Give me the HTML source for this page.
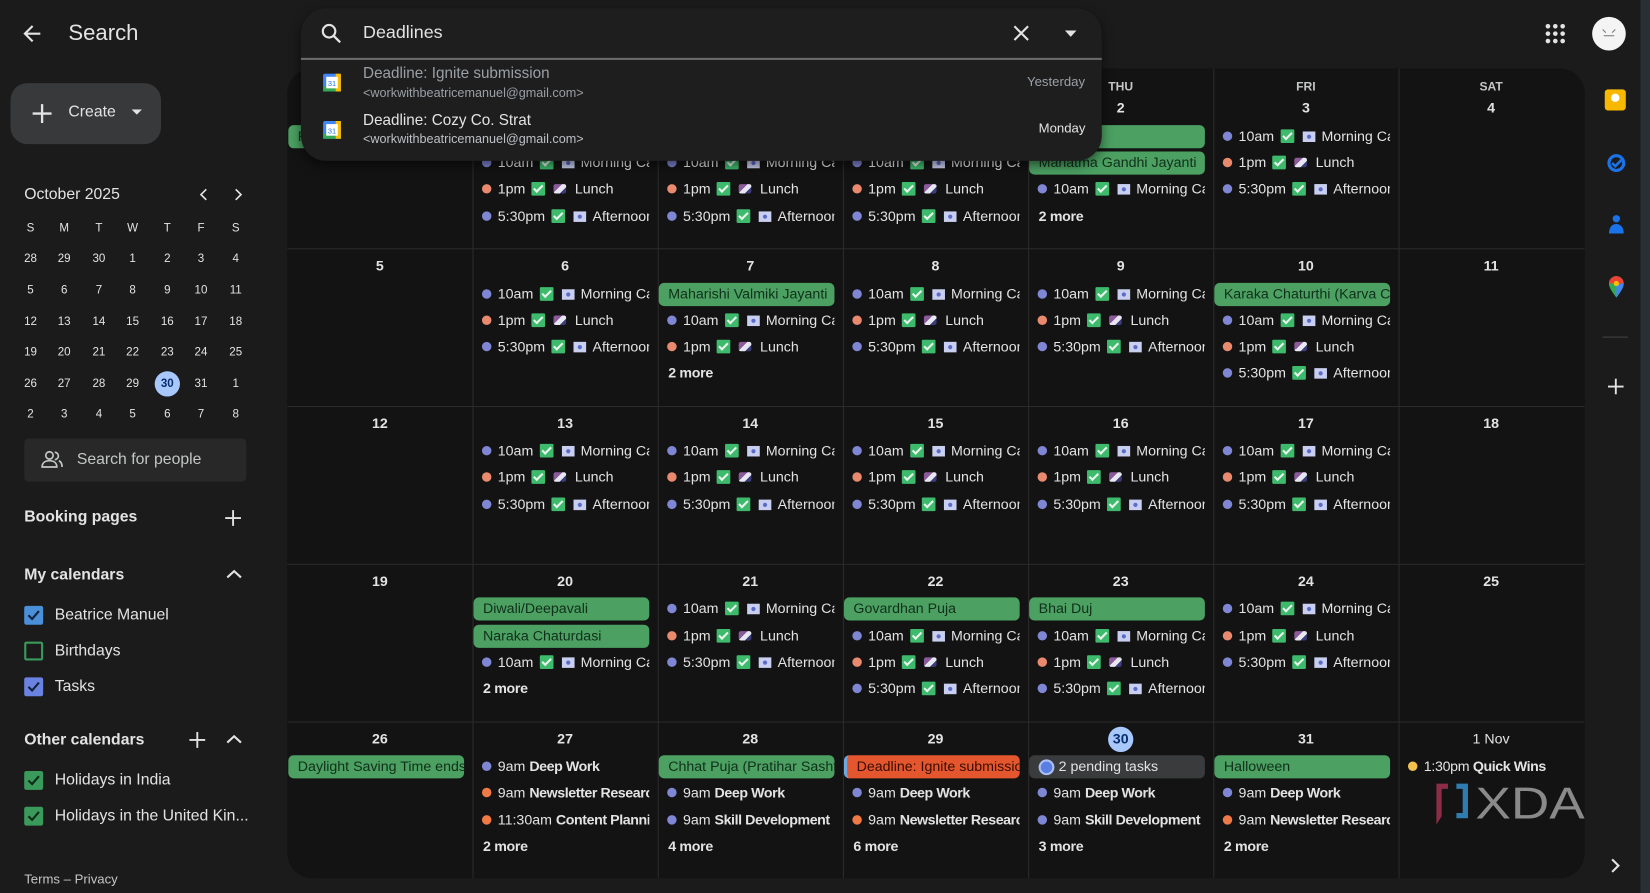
<!DOCTYPE html>
<html><head><meta charset="utf-8"><style>
*{margin:0;padding:0;box-sizing:border-box}
html,body{width:1650px;height:893px;overflow:hidden;background:#1b1b1b;font-family:"Liberation Sans",Arial,sans-serif;color:#e3e3e3}
#w{position:absolute;left:0;top:0;width:1568px;height:849px;transform:scale(1.0523,1.0518);transform-origin:0 0;background:#1b1b1b}
.a{position:absolute}
.t{position:absolute;white-space:nowrap}
#cal{position:absolute;left:273px;top:65px;width:1233px;height:770px;background:#131313;border-radius:24px;overflow:hidden}
.vl{position:absolute;top:0;width:1px;height:770px;background:#2b2b2b}
.hl{position:absolute;left:0;width:1233px;height:1px;background:#2b2b2b}
.dn{position:absolute;width:176px;text-align:center;font-size:13.5px;color:#e3e3e3;font-weight:bold}
.hd{position:absolute;width:176px;text-align:center;font-size:11.5px;color:#c4c7c5;font-weight:bold}
.e{position:absolute;width:160px;height:22px;line-height:22px;font-size:13.5px;color:#e3e3e3;white-space:nowrap;overflow:hidden}
.d{display:inline-block;width:9px;height:9px;border-radius:50%;margin:0 6px 0 1px;vertical-align:0}
.bl{background:#7f86d4}.or{background:#e98a6e}.oo{background:#f07a45}.ye{background:#f2c14e}
.k{display:inline-block;width:13px;height:13px;background:#3dba6c;margin:0 8px 0 6px;vertical-align:-2px;border-radius:1px;position:relative}
.k:after{content:"";position:absolute;left:4px;top:1px;width:3px;height:7px;border:solid #e8f5ec;border-width:0 2px 2px 0;transform:rotate(45deg)}
.v{display:inline-block;width:12px;height:10px;background:#c9cff0;margin-right:6px;vertical-align:-1px;position:relative}
.v:after{content:"";position:absolute;left:4px;top:3px;width:4px;height:4px;border-radius:50%;background:#5b6bc9}
.u{display:inline-block;width:12px;height:9px;margin-right:8px;vertical-align:0;background:linear-gradient(135deg,#8b5a9a 0 40%,#e7e7f2 40% 70%,#3c3c7a 70%);border-radius:2px}
.e b.n{font-weight:bold;color:#e3e3e3;letter-spacing:-0.4px}
.c{position:absolute;width:167px;height:22px;line-height:22px;font-size:13.5px;border-radius:5px;background:#4ba062;color:#10301a;padding-left:9px;white-space:nowrap;overflow:hidden}
.m{position:absolute;font-size:13.5px;font-weight:bold;color:#e3e3e3;letter-spacing:-0.3px}
.mc{position:absolute;width:20px;text-align:center;font-size:11px;color:#e3e3e3}
.cb{position:absolute;left:23px;width:18px;height:18px;border-radius:2px}
.lb{position:absolute;left:52px;font-size:15px;color:#e3e3e3;white-space:nowrap}
</style></head><body><div id="w">

<svg class="a" style="left:20px;top:21px" width="22" height="22" viewBox="0 0 24 24"><path d="M20 12H5M12 4l-8 8 8 8" stroke="#e3e3e3" stroke-width="2.2" fill="none"/></svg>
<div class="t" style="left:65px;top:20px;font-size:21px;color:#e3e3e3">Search</div>
<div class="a" style="left:10px;top:79px;width:143px;height:58px;background:#37393b;border-radius:16px"></div>
<svg class="a" style="left:29px;top:97px" width="22" height="22" viewBox="0 0 22 22"><path d="M11 2v18M2 11h18" stroke="#e3e3e3" stroke-width="2.2"/></svg>
<div class="t" style="left:65px;top:98px;font-size:15px;color:#e3e3e3">Create</div>
<svg class="a" style="left:125px;top:104px" width="10" height="6"><path d="M0 0h10L5 5z" fill="#e3e3e3"/></svg>

<div class="t" style="left:23px;top:176px;font-size:15px;color:#e3e3e3">October 2025</div>
<svg class="a" style="left:188px;top:179px" width="12" height="12"><path d="M8 1L3 6l5 5" stroke="#e3e3e3" stroke-width="1.6" fill="none"/></svg>
<svg class="a" style="left:220px;top:179px" width="12" height="12"><path d="M4 1l5 5-5 5" stroke="#e3e3e3" stroke-width="1.6" fill="none"/></svg>

<div class="mc" style="left:19px;top:211px">S</div><div class="mc" style="left:51px;top:211px">M</div><div class="mc" style="left:84px;top:211px">T</div><div class="mc" style="left:116px;top:211px">W</div><div class="mc" style="left:149px;top:211px">T</div><div class="mc" style="left:181px;top:211px">F</div><div class="mc" style="left:214px;top:211px">S</div>
<div class="mc" style="left:19px;top:240px">28</div><div class="mc" style="left:51px;top:240px">29</div><div class="mc" style="left:84px;top:240px">30</div><div class="mc" style="left:116px;top:240px">1</div><div class="mc" style="left:149px;top:240px">2</div><div class="mc" style="left:181px;top:240px">3</div><div class="mc" style="left:214px;top:240px">4</div>
<div class="mc" style="left:19px;top:270px">5</div><div class="mc" style="left:51px;top:270px">6</div><div class="mc" style="left:84px;top:270px">7</div><div class="mc" style="left:116px;top:270px">8</div><div class="mc" style="left:149px;top:270px">9</div><div class="mc" style="left:181px;top:270px">10</div><div class="mc" style="left:214px;top:270px">11</div>
<div class="mc" style="left:19px;top:300px">12</div><div class="mc" style="left:51px;top:300px">13</div><div class="mc" style="left:84px;top:300px">14</div><div class="mc" style="left:116px;top:300px">15</div><div class="mc" style="left:149px;top:300px">16</div><div class="mc" style="left:181px;top:300px">17</div><div class="mc" style="left:214px;top:300px">18</div>
<div class="mc" style="left:19px;top:329px">19</div><div class="mc" style="left:51px;top:329px">20</div><div class="mc" style="left:84px;top:329px">21</div><div class="mc" style="left:116px;top:329px">22</div><div class="mc" style="left:149px;top:329px">23</div><div class="mc" style="left:181px;top:329px">24</div><div class="mc" style="left:214px;top:329px">25</div>
<div class="mc" style="left:19px;top:359px">26</div><div class="mc" style="left:51px;top:359px">27</div><div class="mc" style="left:84px;top:359px">28</div><div class="mc" style="left:116px;top:359px">29</div>
<div class="a" style="left:147px;top:353px;width:24px;height:24px;border-radius:50%;background:#a8c7fa"></div><div class="mc" style="left:149px;top:359px;color:#062e6f;font-weight:bold">30</div>
<div class="mc" style="left:181px;top:359px">31</div><div class="mc" style="left:214px;top:359px">1</div>
<div class="mc" style="left:19px;top:388px">2</div><div class="mc" style="left:51px;top:388px">3</div><div class="mc" style="left:84px;top:388px">4</div><div class="mc" style="left:116px;top:388px">5</div><div class="mc" style="left:149px;top:388px">6</div><div class="mc" style="left:181px;top:388px">7</div><div class="mc" style="left:214px;top:388px">8</div>

<div class="a" style="left:23px;top:417px;width:211px;height:41px;background:#282828;border-radius:4px"></div>
<svg class="a" style="left:39px;top:428px" width="22" height="18" viewBox="0 0 22 18"><circle cx="8" cy="5" r="3.5" stroke="#c4c7c5" stroke-width="1.6" fill="none"/><path d="M1 16c0-4 3-6 7-6s7 2 7 6z" stroke="#c4c7c5" stroke-width="1.6" fill="none"/><path d="M13 2a3.5 3.5 0 010 7M17 10c2 1 3 3 3 6" stroke="#c4c7c5" stroke-width="1.6" fill="none"/></svg>
<div class="t" style="left:73px;top:428px;font-size:15px;color:#c4c7c5">Search for people</div>

<div class="t" style="left:23px;top:483px;font-size:15px;font-weight:bold">Booking pages</div>
<svg class="a" style="left:213px;top:484px" width="17" height="17"><path d="M8.5 1v15M1 8.5h15" stroke="#e3e3e3" stroke-width="1.8"/></svg>
<div class="t" style="left:23px;top:538px;font-size:15px;font-weight:bold">My calendars</div>
<svg class="a" style="left:215px;top:541px" width="15" height="10"><path d="M1 8l6.5-6 6.5 6" stroke="#e3e3e3" stroke-width="2" fill="none"/></svg>
<div class="cb" style="top:576px;background:#4a8fd8"></div><div class="lb" style="top:576px">Beatrice Manuel</div>
<div class="cb" style="top:610px;border:2px solid #3a9a5b"></div><div class="lb" style="top:610px">Birthdays</div>
<div class="cb" style="top:644px;background:#6b83e0"></div><div class="lb" style="top:644px">Tasks</div>
<div class="t" style="left:23px;top:695px;font-size:15px;font-weight:bold">Other calendars</div>
<svg class="a" style="left:179px;top:695px" width="17" height="17"><path d="M8.5 1v15M1 8.5h15" stroke="#e3e3e3" stroke-width="1.8"/></svg>
<svg class="a" style="left:215px;top:698px" width="15" height="10"><path d="M1 8l6.5-6 6.5 6" stroke="#e3e3e3" stroke-width="2" fill="none"/></svg>
<div class="cb" style="top:733px;background:#3a9a5b"></div><div class="lb" style="top:733px">Holidays in India</div>
<div class="cb" style="top:767px;background:#3a9a5b"></div><div class="lb" style="top:767px">Holidays in the United Kin...</div>
<svg class="a" style="left:23px;top:576px" width="18" height="220"><g stroke="#10213a" stroke-width="2" fill="none"><path d="M4 9l3.5 3.5L14 5"/><path d="M4 77l3.5 3.5L14 73"/><path d="M4 166l3.5 3.5L14 162" stroke="#0c2a16"/><path d="M4 200l3.5 3.5L14 196" stroke="#0c2a16"/></g></svg>
<div class="t" style="left:23px;top:829px;font-size:12.5px;color:#c4c7c5">Terms – Privacy</div>

<div id="cal">
<div class="vl" style="left:176px"></div><div class="vl" style="left:352px"></div><div class="vl" style="left:528px"></div><div class="vl" style="left:704px"></div><div class="vl" style="left:880px"></div><div class="vl" style="left:1056px"></div>
<div class="hl" style="top:171px"></div><div class="hl" style="top:321px"></div><div class="hl" style="top:471px"></div><div class="hl" style="top:621px"></div>
</div>

<div class="hd" style="left:977px;top:77px">THU</div><div class="hd" style="left:1153px;top:77px">FRI</div><div class="hd" style="left:1329px;top:77px">SAT</div>
<div class="dn" style="left:977px;top:95px">2</div><div class="dn" style="left:1153px;top:95px">3</div><div class="dn" style="left:1329px;top:95px">4</div>

<div class="c" style="left:274px;top:119px">F</div>
<div class="c" style="left:978px;top:119px"></div>
<div class="c" style="left:978px;top:144px">Mahatma Gandhi Jayanti</div>
<div class="e" style="left:457px;top:144px"><b class="d bl"></b>10am<b class="k"></b><b class="v"></b>Morning Call</div>
<div class="e" style="left:457px;top:169px"><b class="d or"></b>1pm<b class="k"></b><b class="u"></b>Lunch</div>
<div class="e" style="left:457px;top:195px"><b class="d bl"></b>5:30pm<b class="k"></b><b class="v"></b>Afternoon</div>
<div class="e" style="left:633px;top:144px"><b class="d bl"></b>10am<b class="k"></b><b class="v"></b>Morning Call</div>
<div class="e" style="left:633px;top:169px"><b class="d or"></b>1pm<b class="k"></b><b class="u"></b>Lunch</div>
<div class="e" style="left:633px;top:195px"><b class="d bl"></b>5:30pm<b class="k"></b><b class="v"></b>Afternoon</div>
<div class="e" style="left:809px;top:144px"><b class="d bl"></b>10am<b class="k"></b><b class="v"></b>Morning Call</div>
<div class="e" style="left:809px;top:169px"><b class="d or"></b>1pm<b class="k"></b><b class="u"></b>Lunch</div>
<div class="e" style="left:809px;top:195px"><b class="d bl"></b>5:30pm<b class="k"></b><b class="v"></b>Afternoon</div>
<div class="e" style="left:985px;top:169px"><b class="d bl"></b>10am<b class="k"></b><b class="v"></b>Morning Call</div>
<div class="m" style="left:987px;top:198px">2 more</div>
<div class="e" style="left:1161px;top:119px"><b class="d bl"></b>10am<b class="k"></b><b class="v"></b>Morning Call</div>
<div class="e" style="left:1161px;top:144px"><b class="d or"></b>1pm<b class="k"></b><b class="u"></b>Lunch</div>
<div class="e" style="left:1161px;top:169px"><b class="d bl"></b>5:30pm<b class="k"></b><b class="v"></b>Afternoon</div>

<div class="dn" style="left:273px;top:245px">5</div><div class="dn" style="left:449px;top:245px">6</div><div class="dn" style="left:625px;top:245px">7</div><div class="dn" style="left:801px;top:245px">8</div><div class="dn" style="left:977px;top:245px">9</div><div class="dn" style="left:1153px;top:245px">10</div><div class="dn" style="left:1329px;top:245px">11</div>
<div class="e" style="left:457px;top:269px"><b class="d bl"></b>10am<b class="k"></b><b class="v"></b>Morning Call</div>
<div class="e" style="left:457px;top:294px"><b class="d or"></b>1pm<b class="k"></b><b class="u"></b>Lunch</div>
<div class="e" style="left:457px;top:319px"><b class="d bl"></b>5:30pm<b class="k"></b><b class="v"></b>Afternoon</div>
<div class="c" style="left:626px;top:269px">Maharishi Valmiki Jayanti</div>
<div class="e" style="left:633px;top:294px"><b class="d bl"></b>10am<b class="k"></b><b class="v"></b>Morning Call</div>
<div class="e" style="left:633px;top:319px"><b class="d or"></b>1pm<b class="k"></b><b class="u"></b>Lunch</div>
<div class="m" style="left:635px;top:347px">2 more</div>
<div class="e" style="left:809px;top:269px"><b class="d bl"></b>10am<b class="k"></b><b class="v"></b>Morning Call</div>
<div class="e" style="left:809px;top:294px"><b class="d or"></b>1pm<b class="k"></b><b class="u"></b>Lunch</div>
<div class="e" style="left:809px;top:319px"><b class="d bl"></b>5:30pm<b class="k"></b><b class="v"></b>Afternoon</div>
<div class="e" style="left:985px;top:269px"><b class="d bl"></b>10am<b class="k"></b><b class="v"></b>Morning Call</div>
<div class="e" style="left:985px;top:294px"><b class="d or"></b>1pm<b class="k"></b><b class="u"></b>Lunch</div>
<div class="e" style="left:985px;top:319px"><b class="d bl"></b>5:30pm<b class="k"></b><b class="v"></b>Afternoon</div>
<div class="c" style="left:1154px;top:269px">Karaka Chaturthi (Karva Chauth)</div>
<div class="e" style="left:1161px;top:294px"><b class="d bl"></b>10am<b class="k"></b><b class="v"></b>Morning Call</div>
<div class="e" style="left:1161px;top:319px"><b class="d or"></b>1pm<b class="k"></b><b class="u"></b>Lunch</div>
<div class="e" style="left:1161px;top:344px"><b class="d bl"></b>5:30pm<b class="k"></b><b class="v"></b>Afternoon</div>

<div class="dn" style="left:273px;top:395px">12</div><div class="dn" style="left:449px;top:395px">13</div><div class="dn" style="left:625px;top:395px">14</div><div class="dn" style="left:801px;top:395px">15</div><div class="dn" style="left:977px;top:395px">16</div><div class="dn" style="left:1153px;top:395px">17</div><div class="dn" style="left:1329px;top:395px">18</div>
<div class="e" style="left:457px;top:418px"><b class="d bl"></b>10am<b class="k"></b><b class="v"></b>Morning Call</div>
<div class="e" style="left:457px;top:443px"><b class="d or"></b>1pm<b class="k"></b><b class="u"></b>Lunch</div>
<div class="e" style="left:457px;top:469px"><b class="d bl"></b>5:30pm<b class="k"></b><b class="v"></b>Afternoon</div>
<div class="e" style="left:633px;top:418px"><b class="d bl"></b>10am<b class="k"></b><b class="v"></b>Morning Call</div>
<div class="e" style="left:633px;top:443px"><b class="d or"></b>1pm<b class="k"></b><b class="u"></b>Lunch</div>
<div class="e" style="left:633px;top:469px"><b class="d bl"></b>5:30pm<b class="k"></b><b class="v"></b>Afternoon</div>
<div class="e" style="left:809px;top:418px"><b class="d bl"></b>10am<b class="k"></b><b class="v"></b>Morning Call</div>
<div class="e" style="left:809px;top:443px"><b class="d or"></b>1pm<b class="k"></b><b class="u"></b>Lunch</div>
<div class="e" style="left:809px;top:469px"><b class="d bl"></b>5:30pm<b class="k"></b><b class="v"></b>Afternoon</div>
<div class="e" style="left:985px;top:418px"><b class="d bl"></b>10am<b class="k"></b><b class="v"></b>Morning Call</div>
<div class="e" style="left:985px;top:443px"><b class="d or"></b>1pm<b class="k"></b><b class="u"></b>Lunch</div>
<div class="e" style="left:985px;top:469px"><b class="d bl"></b>5:30pm<b class="k"></b><b class="v"></b>Afternoon</div>
<div class="e" style="left:1161px;top:418px"><b class="d bl"></b>10am<b class="k"></b><b class="v"></b>Morning Call</div>
<div class="e" style="left:1161px;top:443px"><b class="d or"></b>1pm<b class="k"></b><b class="u"></b>Lunch</div>
<div class="e" style="left:1161px;top:469px"><b class="d bl"></b>5:30pm<b class="k"></b><b class="v"></b>Afternoon</div>

<div class="dn" style="left:273px;top:545px">19</div><div class="dn" style="left:449px;top:545px">20</div><div class="dn" style="left:625px;top:545px">21</div><div class="dn" style="left:801px;top:545px">22</div><div class="dn" style="left:977px;top:545px">23</div><div class="dn" style="left:1153px;top:545px">24</div><div class="dn" style="left:1329px;top:545px">25</div>
<div class="c" style="left:450px;top:568px">Diwali/Deepavali</div>
<div class="c" style="left:450px;top:594px">Naraka Chaturdasi</div>
<div class="e" style="left:457px;top:619px"><b class="d bl"></b>10am<b class="k"></b><b class="v"></b>Morning Call</div>
<div class="m" style="left:459px;top:647px">2 more</div>
<div class="e" style="left:633px;top:568px"><b class="d bl"></b>10am<b class="k"></b><b class="v"></b>Morning Call</div>
<div class="e" style="left:633px;top:594px"><b class="d or"></b>1pm<b class="k"></b><b class="u"></b>Lunch</div>
<div class="e" style="left:633px;top:619px"><b class="d bl"></b>5:30pm<b class="k"></b><b class="v"></b>Afternoon</div>
<div class="c" style="left:802px;top:568px">Govardhan Puja</div>
<div class="e" style="left:809px;top:594px"><b class="d bl"></b>10am<b class="k"></b><b class="v"></b>Morning Call</div>
<div class="e" style="left:809px;top:619px"><b class="d or"></b>1pm<b class="k"></b><b class="u"></b>Lunch</div>
<div class="e" style="left:809px;top:644px"><b class="d bl"></b>5:30pm<b class="k"></b><b class="v"></b>Afternoon</div>
<div class="c" style="left:978px;top:568px">Bhai Duj</div>
<div class="e" style="left:985px;top:594px"><b class="d bl"></b>10am<b class="k"></b><b class="v"></b>Morning Call</div>
<div class="e" style="left:985px;top:619px"><b class="d or"></b>1pm<b class="k"></b><b class="u"></b>Lunch</div>
<div class="e" style="left:985px;top:644px"><b class="d bl"></b>5:30pm<b class="k"></b><b class="v"></b>Afternoon</div>
<div class="e" style="left:1161px;top:568px"><b class="d bl"></b>10am<b class="k"></b><b class="v"></b>Morning Call</div>
<div class="e" style="left:1161px;top:594px"><b class="d or"></b>1pm<b class="k"></b><b class="u"></b>Lunch</div>
<div class="e" style="left:1161px;top:619px"><b class="d bl"></b>5:30pm<b class="k"></b><b class="v"></b>Afternoon</div>

<div class="dn" style="left:273px;top:695px">26</div><div class="dn" style="left:449px;top:695px">27</div><div class="dn" style="left:625px;top:695px">28</div><div class="dn" style="left:801px;top:695px">29</div>
<div class="a" style="left:1053px;top:691px;width:24px;height:24px;border-radius:50%;background:#a8c7fa"></div><div class="dn" style="left:977px;top:695px;color:#062e6f">30</div>
<div class="dn" style="left:1153px;top:695px">31</div><div class="dn" style="left:1329px;top:695px;font-weight:normal">1 Nov</div>
<div class="c" style="left:274px;top:718px">Daylight Saving Time ends</div>
<div class="e" style="left:457px;top:718px"><b class="d bl"></b>9am <b class="n">Deep Work</b></div>
<div class="e" style="left:457px;top:743px"><b class="d oo"></b>9am <b class="n">Newsletter Research</b></div>
<div class="e" style="left:457px;top:769px"><b class="d oo"></b>11:30am <b class="n">Content Planning</b></div>
<div class="m" style="left:459px;top:797px">2 more</div>
<div class="c" style="left:626px;top:718px">Chhat Puja (Pratihar Sashthi)</div>
<div class="e" style="left:633px;top:743px"><b class="d bl"></b>9am <b class="n">Deep Work</b></div>
<div class="e" style="left:633px;top:769px"><b class="d bl"></b>9am <b class="n">Skill Development</b></div>
<div class="m" style="left:635px;top:797px">4 more</div>
<div class="c" style="left:802px;top:718px;background:#e4572e;color:#3a0d02;border-left:3px solid #6fa8dc">Deadline: Ignite submission</div>
<div class="e" style="left:809px;top:743px"><b class="d bl"></b>9am <b class="n">Deep Work</b></div>
<div class="e" style="left:809px;top:769px"><b class="d oo"></b>9am <b class="n">Newsletter Research</b></div>
<div class="m" style="left:811px;top:797px">6 more</div>
<div class="c" style="left:978px;top:718px;background:#3a3b3d;color:#e3e3e3;padding-left:28px">2 pending tasks</div>
<div class="a" style="left:987px;top:722px;width:15px;height:15px;border-radius:50%;background:#5b7ee5;border:2px solid #aac0f5"></div>
<div class="e" style="left:985px;top:743px"><b class="d bl"></b>9am <b class="n">Deep Work</b></div>
<div class="e" style="left:985px;top:769px"><b class="d bl"></b>9am <b class="n">Skill Development</b></div>
<div class="m" style="left:987px;top:797px">3 more</div>
<div class="c" style="left:1154px;top:718px">Halloween</div>
<div class="e" style="left:1161px;top:743px"><b class="d bl"></b>9am <b class="n">Deep Work</b></div>
<div class="e" style="left:1161px;top:769px"><b class="d oo"></b>9am <b class="n">Newsletter Research</b></div>
<div class="m" style="left:1163px;top:797px">2 more</div>
<div class="e" style="left:1337px;top:718px;letter-spacing:-0.3px"><b class="d ye"></b>1:30pm <b class="n">Quick Wins</b></div>
<svg class="a" style="left:1362px;top:742px" width="146" height="44" viewBox="0 0 146 44"><path d="M3 3h11v5H8v26l-5 8z" fill="#8b2d46"/><path d="M22 3h11v33H22v-5h6V8h-6z" fill="#2f7db0"/><text x="40" y="36" font-family="Liberation Sans,sans-serif" font-size="42" fill="#8a8a8a" textLength="104" lengthAdjust="spacingAndGlyphs">XDA</text></svg>

<div class="a" style="left:286px;top:8px;width:761px;height:145px;background:#1e1e1e;border-radius:24px;box-shadow:0 4px 10px rgba(0,0,0,.5)"></div>
<div class="a" style="left:286px;top:55px;width:761px;height:2px;background:#6a6a6a"></div>
<svg class="a" style="left:304px;top:21px" width="22" height="22" viewBox="0 0 24 24"><circle cx="9.5" cy="9.5" r="6.5" stroke="#e3e3e3" stroke-width="2.2" fill="none"/><path d="M14.5 14.5L21 21" stroke="#e3e3e3" stroke-width="2.4"/></svg>
<div class="t" style="left:345px;top:21px;font-size:17px;color:#e3e3e3">Deadlines</div>
<svg class="a" style="left:962px;top:23px" width="17" height="17"><path d="M2 2l13 13M15 2L2 15" stroke="#e3e3e3" stroke-width="2"/></svg>
<svg class="a" style="left:1012px;top:29px" width="11" height="6"><path d="M0 0h11L5.5 6z" fill="#e3e3e3"/></svg>
<svg class="a" style="left:307px;top:70px" width="17" height="17" viewBox="0 0 17 17"><rect x="0" y="0" width="17" height="17" rx="2" fill="#4285f4"/><rect x="0" y="12" width="17" height="5" fill="#34a853"/><rect x="12" y="0" width="5" height="17" fill="#fbbc04"/><rect x="3" y="3" width="11" height="11" fill="#fff"/><text x="8.5" y="12" font-size="7" text-anchor="middle" fill="#1a73e8" font-family="Liberation Sans">31</text></svg>
<svg class="a" style="left:307px;top:115px" width="17" height="17" viewBox="0 0 17 17"><rect x="0" y="0" width="17" height="17" rx="2" fill="#4285f4"/><rect x="0" y="12" width="17" height="5" fill="#34a853"/><rect x="12" y="0" width="5" height="17" fill="#fbbc04"/><rect x="3" y="3" width="11" height="11" fill="#fff"/><text x="8.5" y="12" font-size="7" text-anchor="middle" fill="#1a73e8" font-family="Liberation Sans">31</text></svg>
<div class="t" style="left:345px;top:62px;font-size:14.5px;color:#9aa0a6">Deadline: Ignite submission</div>
<div class="t" style="left:345px;top:81px;font-size:12px;color:#9aa0a6">&lt;workwithbeatricemanuel@gmail.com&gt;</div>
<div class="t" style="left:976px;top:71px;font-size:12.5px;color:#9aa0a6">Yesterday</div>
<div class="t" style="left:345px;top:107px;font-size:14.5px;color:#e3e3e3">Deadline: Cozy Co. Strat</div>
<div class="t" style="left:345px;top:125px;font-size:12px;color:#bdc1c6">&lt;workwithbeatricemanuel@gmail.com&gt;</div>
<div class="t" style="left:987px;top:115px;font-size:12.5px;color:#e3e3e3">Monday</div>

<svg class="a" style="left:1468px;top:22px" width="20" height="20"><g fill="#e3e3e3"><circle cx="3" cy="3" r="2.2"/><circle cx="10" cy="3" r="2.2"/><circle cx="17" cy="3" r="2.2"/><circle cx="3" cy="10" r="2.2"/><circle cx="10" cy="10" r="2.2"/><circle cx="17" cy="10" r="2.2"/><circle cx="3" cy="17" r="2.2"/><circle cx="10" cy="17" r="2.2"/><circle cx="17" cy="17" r="2.2"/></g></svg>
<div class="a" style="left:1513px;top:16px;width:32px;height:32px;border-radius:50%;background:#f4f4f4"></div>
<svg class="a" style="left:1520px;top:26px" width="18" height="10"><path d="M3 2l3 3M15 2l-3 3M4 8h10" stroke="#777" stroke-width="1"/></svg>
<div class="a" style="left:1559px;top:0;width:9px;height:849px;background:#2a2f36"></div>
<div class="a" style="left:1525px;top:85px;width:20px;height:20px;border-radius:3px;background:#f9b800"></div>
<div class="a" style="left:1531px;top:89px;width:8px;height:8px;border-radius:50%;background:#fff"></div>
<svg class="a" style="left:1526px;top:145px" width="20" height="20"><circle cx="10" cy="10" r="7" stroke="#1a73e8" stroke-width="3" fill="none"/><path d="M6 10l3 3 7-7" stroke="#1a73e8" stroke-width="2.5" fill="none"/></svg>
<svg class="a" style="left:1527px;top:203px" width="18" height="20"><circle cx="9" cy="5" r="3.5" fill="#1a73e8"/><path d="M2 19c0-6 3-9 7-9s7 3 7 9z" fill="#1a73e8"/></svg>
<svg class="a" style="left:1528px;top:262px" width="16" height="22"><path d="M8 21C3 14 1 11 1 7.5a7 7 0 0114 0C15 11 13 14 8 21z" fill="#34a853"/><path d="M1 7.5a7 7 0 0114 0H1z" fill="#ea4335"/><path d="M15 7.5C15 11 13 14 8 21V7.5z" fill="#4285f4"/><circle cx="8" cy="7.5" r="2.5" fill="#fbbc04"/></svg>
<div class="a" style="left:1523px;top:320px;width:24px;height:1px;background:#444"></div>
<svg class="a" style="left:1528px;top:360px" width="15" height="15"><path d="M7.5 0v15M0 7.5h15" stroke="#e3e3e3" stroke-width="1.8"/></svg>
<svg class="a" style="left:1530px;top:816px" width="10" height="14"><path d="M2 1l6 6-6 6" stroke="#e3e3e3" stroke-width="2" fill="none"/></svg>
</div></body></html>
